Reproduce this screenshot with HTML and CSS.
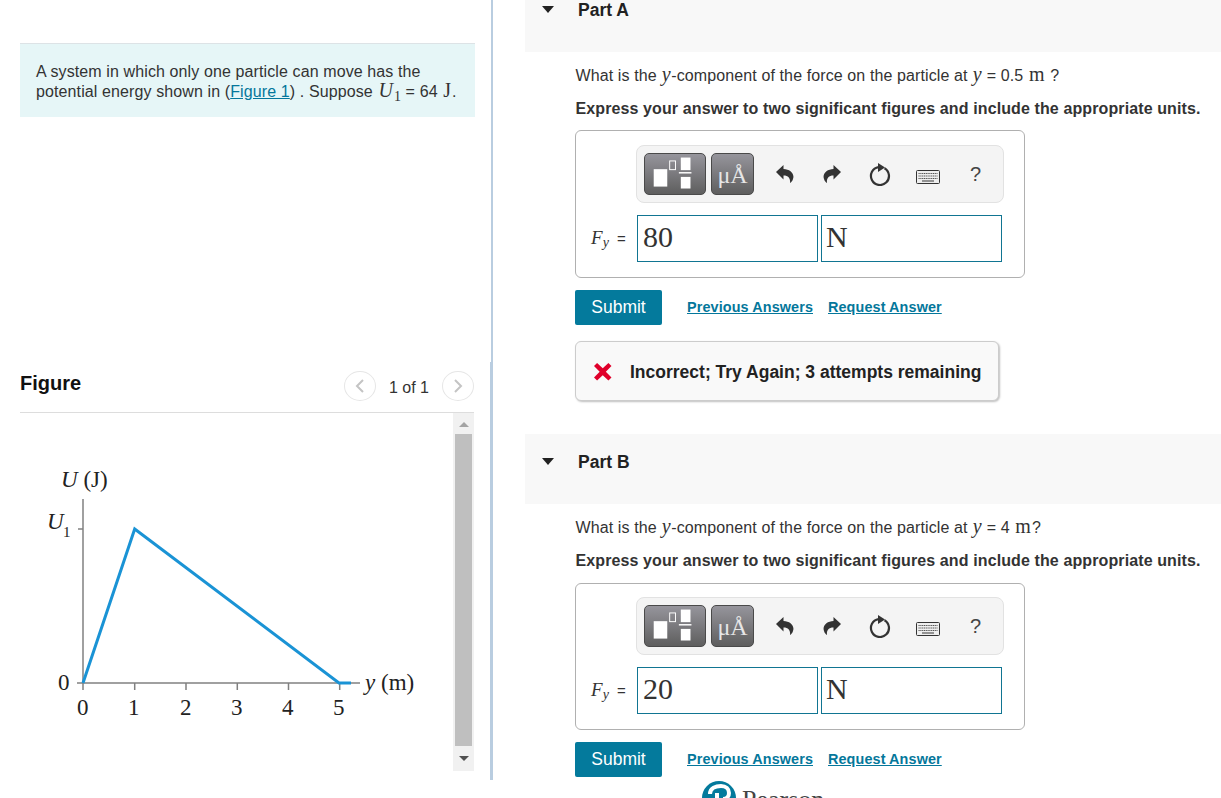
FILE: index.html
```html
<!DOCTYPE html>
<html lang="en">
<head>
    <meta charset="UTF-8">
    <meta name="viewport" content="width=device-width, initial-scale=1.0">
    <title>Part A and Part B</title>
    <link rel="stylesheet" href="styles.css">
</head>
<body>
<!-- Toolbar icons, reused by both answer boxes -->
<svg class="icon-defs" width="0" height="0">
    <symbol id="icon-template" viewBox="0 0 62 42">
        <rect x="9" y="16" width="14" height="18" fill="#fff"/>
        <rect x="25.5" y="7.5" width="6" height="9" fill="none" stroke="#fff" stroke-width="1"/>
        <rect x="37" y="4" width="10" height="13" fill="#fff"/>
        <rect x="35" y="19" width="13" height="1.5" fill="#fff"/>
        <rect x="37" y="24" width="10" height="12" fill="#fff"/>
    </symbol>
    <symbol id="icon-undo" viewBox="0 0 18 18">
        <path d="M0 7 L7.5 0 V4 C14 4 19 9 17 14 C16.5 16 15 17.5 14 18 C14.5 14 13 10.5 7.5 10.5 V14.5 Z" fill="#333"/>
    </symbol>
    <symbol id="icon-redo" viewBox="0 0 18 18">
        <path d="M18 7 L10.5 0 V4 C4 4 -1 9 1 14 C1.5 16 3 17.5 4 18 C3.5 14 5 10.5 10.5 10.5 V14.5 Z" fill="#333"/>
    </symbol>
    <symbol id="icon-reset" viewBox="0 0 22 24">
        <path d="M9.5 5.1 A9 9 0 1 0 15.5 6.2" fill="none" stroke="#333" stroke-width="2.2"/>
        <path d="M9 1 L16 5.5 L9 10 Z" fill="#333"/>
    </symbol>
    <symbol id="icon-keyboard" viewBox="0 0 24 14">
        <rect x="0.5" y="0.5" width="23" height="13" rx="1" fill="#eee" stroke="#333"/>
        <path d="M2.5 3.5 H21.5 M2.5 6 H21.5 M2.5 8.5 H21.5" stroke="#555" stroke-width="1.2" stroke-dasharray="1.2 .6"/>
        <path d="M6 11 H18" stroke="#555" stroke-width="1.2"/>
    </symbol>
</svg>

<main class="main-container">
    <!-- Left: intro text and figure -->
    <section class="left-pane">
        <p class="intro-box">
            A system in which only one particle can move has the potential energy shown in
            (<a class="intro-link" href="#">Figure 1</a>) . Suppose <i class="math">U</i><sub class="math-sub">1</sub> = 64 <span class="math-unit">J</span>.
        </p>

        <div class="figure-header">
            <h2 class="figure-title">Figure</h2>
            <div class="pager">
                <span class="pager-btn">
                    <svg width="10" height="16" viewBox="0 0 10 16"><path d="M8 2 L2 8 L8 14" fill="none" stroke="#c4c4c4" stroke-width="2"/></svg>
                </span>
                <span class="pager-text">1 of 1</span>
                <span class="pager-btn">
                    <svg width="10" height="16" viewBox="0 0 10 16"><path d="M2 2 L8 8 L2 14" fill="none" stroke="#c4c4c4" stroke-width="2"/></svg>
                </span>
            </div>
        </div>

        <div class="figure-body">
            <svg class="plot" width="433" height="358" viewBox="20 413 433 358">
                <g stroke="#808080" stroke-width="1.5" fill="none">
                    <path d="M83 499 V690"/>
                    <path d="M77 683 H360"/>
                    <path d="M78 529 H83"/>
                    <path d="M134.7 683 V690 M186 683 V690 M237.3 683 V690 M288.5 683 V690 M339.7 683 V690"/>
                </g>
                <path d="M83 683 L134.7 529 L339 683 H351" fill="none" stroke="#1a93d5" stroke-width="3"/>
                <g class="plot-text">
                    <text x="61" y="487"><tspan font-style="italic">U</tspan> (J)</text>
                    <text x="47" y="529" font-style="italic">U</text>
                    <text x="63" y="537" class="plot-sub">1</text>
                    <text x="58" y="690">0</text>
                    <text x="77" y="715">0</text>
                    <text x="128" y="715">1</text>
                    <text x="180" y="715">2</text>
                    <text x="231" y="715">3</text>
                    <text x="282" y="715">4</text>
                    <text x="333" y="715">5</text>
                    <text x="365" y="690"><tspan font-style="italic">y</tspan> (m)</text>
                </g>
            </svg>
            <div class="scrollbar">
                <span class="scroll-up"></span>
                <span class="scroll-thumb"></span>
                <span class="scroll-down"></span>
            </div>
        </div>
    </section>

    <!-- Right: the two parts -->
    <section class="right-pane">
        <div class="part-header part-header-first">
            <span class="part-caret"></span>
            <span class="part-title">Part A</span>
        </div>
        <div class="part-body">
            <p class="question">What is the <i class="math">y</i>-component of the force on the particle at <i class="math">y</i> = 0.5 <span class="math-unit">m</span> ?</p>
            <p class="instruction">Express your answer to two significant figures and include the appropriate units.</p>
            <div class="answer-box">
                <div class="toolbar">
                    <span class="tool-button tool-template"><svg width="62" height="42"><use href="#icon-template"/></svg></span>
                    <span class="tool-button tool-units">μÅ</span>
                    <svg class="tool-icon icon-undo" width="18" height="18"><use href="#icon-undo"/></svg>
                    <svg class="tool-icon icon-redo" width="18" height="18"><use href="#icon-redo"/></svg>
                    <svg class="tool-icon icon-reset" width="22" height="24"><use href="#icon-reset"/></svg>
                    <svg class="tool-icon icon-keyboard" width="24" height="14"><use href="#icon-keyboard"/></svg>
                    <span class="tool-help">?</span>
                </div>
                <div class="answer-row">
                    <span class="answer-label"><i>F<sub>y</sub></i> <span class="answer-equals">=</span></span>
                    <div class="answer-input">80</div>
                    <div class="answer-input answer-unit">N</div>
                </div>
            </div>
            <div class="action-row">
                <a class="submit-button" href="#">Submit</a>
                <a class="action-link" href="#">Previous Answers</a>
                <a class="action-link" href="#">Request Answer</a>
            </div>
            <div class="feedback-box">
                <svg width="18" height="18" viewBox="0 0 17.5 17.5"><path d="M0 3 L3 0 L8.5 5 L14 0 L17 3 L11.5 8.5 L17 14 L14 17 L8.5 12 L3 17 L0 14 L5.5 8.5 Z" fill="#e0002b"/></svg>
                <span class="feedback-text">Incorrect; Try Again; 3 attempts remaining</span>
            </div>
        </div>

        <div class="part-header">
            <span class="part-caret"></span>
            <span class="part-title">Part B</span>
        </div>
        <div class="part-body">
            <p class="question">What is the <i class="math">y</i>-component of the force on the particle at <i class="math">y</i> = 4 <span class="math-unit">m</span>?</p>
            <p class="instruction">Express your answer to two significant figures and include the appropriate units.</p>
            <div class="answer-box answer-box-second">
                <div class="toolbar">
                    <span class="tool-button tool-template"><svg width="62" height="42"><use href="#icon-template"/></svg></span>
                    <span class="tool-button tool-units">μÅ</span>
                    <svg class="tool-icon icon-undo" width="18" height="18"><use href="#icon-undo"/></svg>
                    <svg class="tool-icon icon-redo" width="18" height="18"><use href="#icon-redo"/></svg>
                    <svg class="tool-icon icon-reset" width="22" height="24"><use href="#icon-reset"/></svg>
                    <svg class="tool-icon icon-keyboard" width="24" height="14"><use href="#icon-keyboard"/></svg>
                    <span class="tool-help">?</span>
                </div>
                <div class="answer-row">
                    <span class="answer-label"><i>F<sub>y</sub></i> <span class="answer-equals">=</span></span>
                    <div class="answer-input">20</div>
                    <div class="answer-input answer-unit">N</div>
                </div>
            </div>
            <div class="action-row">
                <a class="submit-button" href="#">Submit</a>
                <a class="action-link" href="#">Previous Answers</a>
                <a class="action-link" href="#">Request Answer</a>
            </div>
        </div>

        <div class="pearson-logo">
            <svg width="34" height="34" viewBox="0 0 34 34">
                <circle cx="17" cy="17" r="17" fill="#047a9c"/>
                <path d="M8 13 C8 7 14 5 19 5 C24 5 27 8 27 12 C27 16 24 18 21 18 M15 12 V30" fill="none" stroke="#fff" stroke-width="4"/>
            </svg>
            <span class="pearson-name">Pearson</span>
        </div>
    </section>
</main>
</body>
</html>
```

FILE: styles.css
```css
html, body {
    margin: 0;
    height: 798px;
    overflow: hidden;
    background: #fff;
}

body {
    font-family: "Liberation Sans", Arial, sans-serif;
    font-size: 16px;
    letter-spacing: 0.11px;
    color: #333;
}

.icon-defs {
    position: absolute;
}

.main-container {
    display: flex;
    align-items: flex-start;
}

a {
    color: #04779b;
}

.math {
    margin: 0 1px;
    font-family: "Liberation Serif", serif;
    font-style: italic;
    font-size: 20px;
    line-height: 0;
}

.math-sub {
    font-family: "Liberation Serif", serif;
    font-size: 14px;
    line-height: 0;
}

.math-unit {
    margin: 0 1px;
    font-family: "Liberation Serif", serif;
    font-size: 20px;
    line-height: 0;
}

/* Left pane */
.left-pane {
    position: relative;
    box-sizing: border-box;
    width: 493px;
    height: 780px;
    padding: 43px 16px 0 20px;
    border-right: 2px solid #b9cde0;
}

/* Divider is one pixel wider next to the figure */
.left-pane::after {
    content: "";
    position: absolute;
    top: 362px;
    right: 0;
    bottom: 0;
    width: 1px;
    background: #b9cde0;
}

.intro-box {
    margin: 0;
    padding: 18px 16px 0;
    height: 55px;
    line-height: 20px;
    background: #e6f6f7;
    border-top: 1px solid #dde3e6;
}

.figure-header {
    display: flex;
    justify-content: space-between;
    align-items: flex-start;
    height: 41px;
    margin: 254px 1px 0 0;
    border-bottom: 1px solid #ddd;
}

.figure-title {
    margin: 0;
    font-size: 20px;
    line-height: 24px;
    letter-spacing: 0;
    color: #111;
}

.pager {
    display: flex;
    align-items: center;
    gap: 13px;
}

.pager-btn {
    display: flex;
    align-items: center;
    justify-content: center;
    box-sizing: border-box;
    width: 32px;
    height: 30px;
    border: 1px solid #e6e6e6;
    border-radius: 50%;
}

.pager-text {
    padding-top: 4px;
    letter-spacing: 0;
}

.figure-body {
    display: flex;
    justify-content: space-between;
    height: 358px;
    margin-right: 1px;
}

.plot-text {
    font-family: "Liberation Serif", serif;
    font-size: 23px;
    letter-spacing: 0;
    fill: #222;
}

.plot-sub {
    font-size: 15px;
}

.scrollbar {
    display: flex;
    flex-direction: column;
    align-items: center;
    width: 21px;
    background: #f1f1f1;
}

.scroll-up {
    width: 0;
    height: 0;
    margin-top: 9px;
    border: 5px solid transparent;
    border-top: 0;
    border-bottom: 5px solid #a3a3a3;
}

.scroll-thumb {
    width: 17px;
    height: 312px;
    margin-top: 7px;
    background: #bfbfbf;
}

.scroll-down {
    width: 0;
    height: 0;
    margin-top: 10px;
    border: 5px solid transparent;
    border-bottom: 0;
    border-top: 5px solid #505050;
}

/* Right pane */
.right-pane {
    flex: 1;
    padding-left: 32px;
}

.part-header {
    display: flex;
    align-items: flex-start;
    box-sizing: border-box;
    height: 70px;
    padding-top: 18px;
    background: #f8f8f8;
}

.part-header-first {
    height: 52px;
    padding-top: 0;
}

.part-caret {
    width: 0;
    height: 0;
    margin: 6px 24px 0 17px;
    border: 6.5px solid transparent;
    border-bottom: 0;
    border-top: 7px solid #222;
}

.part-title {
    margin-top: 1px;
    font-size: 17.5px;
    font-weight: bold;
    line-height: 18px;
    letter-spacing: 0;
    color: #222;
}

.part-body {
    padding-left: 50px;
}

.question {
    margin: 14px 0 0;
    padding-left: 0.5px;
    line-height: 20px;
}

.question .math {
    margin: 0 0.5px;
}

.instruction {
    margin: 13px 0 0;
    padding-left: 0.5px;
    font-weight: bold;
    line-height: 20px;
}

.answer-box {
    box-sizing: border-box;
    width: 450px;
    height: 148px;
    margin-top: 11px;
    padding-top: 14px;
    border: 1px solid #b0b0b0;
    border-radius: 6px;
}

.answer-box-second {
    height: 147px;
    margin-top: 12px;
    padding-top: 13px;
}

.toolbar {
    display: flex;
    align-items: center;
    box-sizing: border-box;
    width: 368px;
    height: 58px;
    margin-left: 60px;
    padding-left: 7px;
    background: #f4f4f4;
    border: 1px solid #e2e2e2;
    border-radius: 8px;
}

.tool-button {
    display: flex;
    align-items: center;
    justify-content: center;
    box-sizing: border-box;
    height: 42px;
    border: 1px solid #4a4a4a;
    border-radius: 5px;
    background: linear-gradient(#96959c, #5e5e5e);
}

.tool-template {
    width: 62px;
    margin-right: 5px;
}

.tool-units {
    width: 43px;
    padding-top: 2px;
    font-family: "Liberation Serif", serif;
    font-size: 24px;
    letter-spacing: 0;
    color: #e6e6e6;
}

.tool-icon {
    flex: none;
}

.icon-undo {
    margin-left: 22px;
}

.icon-redo {
    margin-left: 29px;
}

.icon-reset {
    margin-left: 28px;
}

.icon-keyboard {
    margin-left: 25px;
    margin-top: 6px;
}

.tool-help {
    margin-left: 30px;
    font-size: 20px;
    color: #444;
}

.answer-row {
    display: flex;
    align-items: center;
    margin-top: 12px;
    padding-left: 15px;
}

.answer-label {
    width: 46px;
    font-family: "Liberation Serif", serif;
    font-size: 19px;
    line-height: 20px;
}

.answer-label sub {
    font-size: 14px;
    line-height: 0;
    vertical-align: -3px;
}

.answer-equals {
    font-family: "Liberation Sans", sans-serif;
    font-size: 15px;
    margin-left: 3px;
}

.answer-input {
    box-sizing: border-box;
    width: 181px;
    height: 47px;
    padding-left: 5px;
    margin-right: 3px;
    border: 1px solid #117592;
    font-family: "Liberation Serif", serif;
    font-size: 30px;
    letter-spacing: 0;
    line-height: 41px;
}

.answer-unit {
    margin-right: 0;
    padding-left: 4px;
}

.action-row {
    display: flex;
    align-items: center;
    margin-top: 12px;
}

.submit-button {
    box-sizing: border-box;
    width: 87px;
    height: 35px;
    margin-right: 25px;
    border-radius: 2px;
    background: #047a9c;
    color: #fff;
    font-size: 17.5px;
    letter-spacing: 0;
    text-align: center;
    text-decoration: none;
    line-height: 34px;
}

.action-link {
    margin-right: 15px;
    padding-bottom: 2px;
    font-size: 14.4px;
    font-weight: bold;
}

.feedback-box {
    display: flex;
    align-items: center;
    gap: 18px;
    box-sizing: border-box;
    width: 424px;
    height: 60px;
    margin: 16px 0 33px;
    padding: 2px 0 0 18px;
    background: #f9f9f9;
    border: 1px solid #ccc;
    border-radius: 6px;
    box-shadow: 1px 1px 2px rgba(0, 0, 0, 0.25);
}

.feedback-text {
    font-size: 17.5px;
    font-weight: bold;
    letter-spacing: 0;
    color: #222;
}

.pearson-logo {
    display: flex;
    align-items: flex-start;
    gap: 6px;
    margin: 4px 0 0 177px;
}

.pearson-name {
    font-family: "Liberation Serif", serif;
    font-size: 26px;
    line-height: 26px;
    letter-spacing: 0;
    margin-top: 6px;
    color: #444;
}
```
